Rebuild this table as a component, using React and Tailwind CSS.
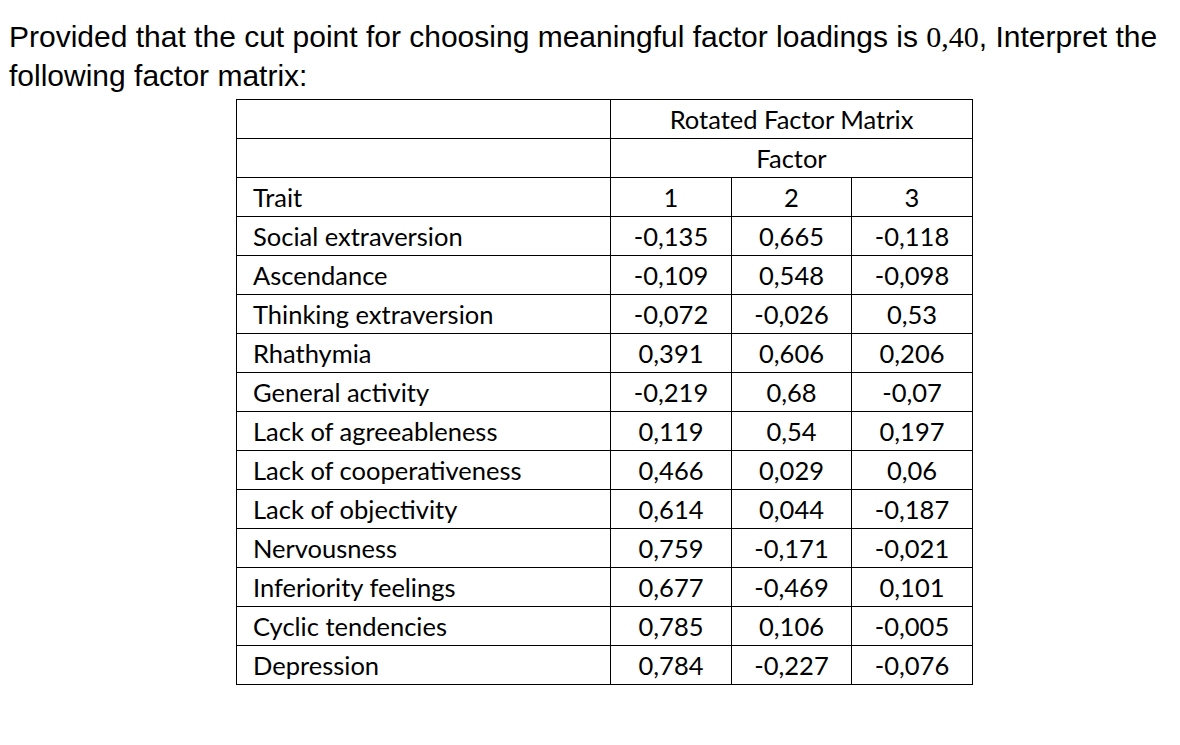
import React from 'react';

const rows = [
  ['Social extraversion', '-0,135', '0,665', '-0,118'],
  ['Ascendance', '-0,109', '0,548', '-0,098'],
  ['Thinking extraversion', '-0,072', '-0,026', '0,53'],
  ['Rhathymia', '0,391', '0,606', '0,206'],
  ['General activity', '-0,219', '0,68', '-0,07'],
  ['Lack of agreeableness', '0,119', '0,54', '0,197'],
  ['Lack of cooperativeness', '0,466', '0,029', '0,06'],
  ['Lack of objectivity', '0,614', '0,044', '-0,187'],
  ['Nervousness', '0,759', '-0,171', '-0,021'],
  ['Inferiority feelings', '0,677', '-0,469', '0,101'],
  ['Cyclic tendencies', '0,785', '0,106', '-0,005'],
  ['Depression', '0,784', '-0,227', '-0,076'],
];

const cell = 'border border-black h-[39px] p-0 pt-[2px] align-middle';

const App = () => {
  return (
    <div className="min-h-screen bg-white">
      <p className="pl-[9px] pt-[17px] w-[1175px] text-[30px] leading-[39px] text-black font-['Liberation_Sans',Arial,sans-serif]">
        Provided that the cut point for choosing meaningful factor loadings is{' '}
        <span className="font-['Liberation_Serif',serif]">0,40</span>, Interpret the following factor matrix:
      </p>
      <table className="ml-[236px] mt-[4px] border-collapse text-[25.5px] leading-none text-black font-['Lato',sans-serif]">
        <colgroup>
          <col className="w-[374px]" />
          <col className="w-[121px]" />
          <col className="w-[120px]" />
          <col className="w-[121px]" />
        </colgroup>
        <tbody>
          <tr>
            <td className={cell}></td>
            <td className={`${cell} text-center`} colSpan={3}>Rotated Factor Matrix</td>
          </tr>
          <tr>
            <td className={cell}></td>
            <td className={`${cell} text-center`} colSpan={3}>Factor</td>
          </tr>
          <tr>
            <td className={`${cell} pl-4`}>Trait</td>
            <td className={`${cell} text-center`}>1</td>
            <td className={`${cell} text-center`}>2</td>
            <td className={`${cell} text-center`}>3</td>
          </tr>
          {rows.map((r) => (
            <tr key={r[0]}>
              <td className={`${cell} pl-4`}>{r[0]}</td>
              <td className={`${cell} text-center`}>{r[1]}</td>
              <td className={`${cell} text-center`}>{r[2]}</td>
              <td className={`${cell} text-center`}>{r[3]}</td>
            </tr>
          ))}
        </tbody>
      </table>
    </div>
  );
};

export default App;
